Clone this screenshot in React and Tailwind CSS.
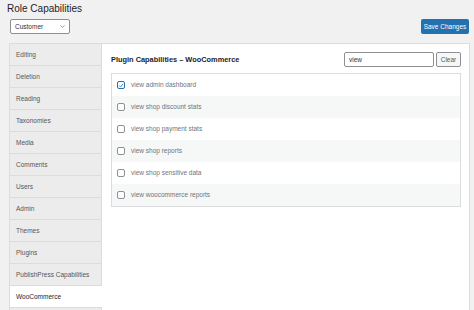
import { ChevronDown } from "lucide-react";

const TABS = [
  "Editing",
  "Deletion",
  "Reading",
  "Taxonomies",
  "Media",
  "Comments",
  "Users",
  "Admin",
  "Themes",
  "Plugins",
  "PublishPress Capabilities",
  "WooCommerce",
  "",
];

const CAPS = [
  { name: "view admin dashboard", checked: true },
  { name: "view shop discount stats" },
  { name: "view shop payment stats" },
  { name: "view shop reports" },
  { name: "view shop sensitive data" },
  { name: "view woocommerce reports" },
];

function Checkbox({ checked }) {
  return (
    <span
      className={`flex h-[8px] w-[8px] shrink-0 items-center justify-center rounded-[2px] border bg-white ${
        checked ? "border-[#2271b1]" : "border-[#8c8f94]"
      }`}
    >
      {checked && (
        <svg viewBox="0 0 10 10" className="h-[7px] w-[7px]">
          <path d="M2 5.2 4.2 7.4 8.2 2.6" fill="none" stroke="#2271b1" strokeWidth="1.4" />
        </svg>
      )}
    </span>
  );
}

export default function App() {
  return (
    <div className="h-[310px] w-[474px] overflow-hidden bg-[#f1f1f1] font-['Liberation_Sans',Arial,sans-serif]">
      <h1 className="pl-[7px] pt-[2px] text-[10px] leading-[14px] text-[#1d2327]">Role Capabilities</h1>

      <div className="mt-[3px] flex items-center justify-between pl-[10px] pr-[5px]">
        <div className="flex h-[15px] w-[60px] items-center justify-between rounded-[2px] border border-[#8c8f94] bg-white pl-[4px] pr-[3px] text-[6.5px] text-[#2c3338]">
          Customer
          <ChevronDown className="h-[7px] w-[7px] text-[#50575e]" strokeWidth={2} />
        </div>
        <button className="h-[15px] w-[48px] rounded-[2px] bg-[#2271b1] text-[6.5px] text-white">Save Changes</button>
      </div>

      <div className="ml-[9px] mr-[4px] mt-[9px] flex border-l border-t border-[#dcdcde]">
        <div className="w-[92px] shrink-0">
          {TABS.map((t, i) => {
            const active = t === "WooCommerce";
            return (
              <div
                key={i}
                className={`flex h-[22px] items-center border-b border-[#dcdcde] pl-[6px] text-[6.5px] ${
                  active ? "bg-white text-[#1d2327]" : "border-r bg-[#ececec] text-[#50575e]"
                }`}
              >
                {t}
              </div>
            );
          })}
        </div>

        <div className="flex-1 border-r border-[#dcdcde] bg-white pl-[9px] pr-[8px] pt-[8px]">
          <div className="flex h-[15px] items-center">
            <h2 className="flex-1 text-[7.4px] font-bold text-[#1d2327]">Plugin Capabilities – WooCommerce</h2>
            <div className="flex h-[15px] w-[90px] items-center rounded-[2px] border border-[#8c8f94] pl-[4px] text-[6.5px] text-[#2c3338]">
              view
            </div>
            <button className="ml-[2px] h-[15px] w-[25px] rounded-[2px] border border-[#8c8f94] bg-[#f6f7f7] text-[6.5px] text-[#50575e]">
              Clear
            </button>
          </div>

          <div className="mt-[6px] border border-[#dcdcde]">
            {CAPS.map((c, i) => (
              <div
                key={c.name}
                className={`flex h-[22px] items-center gap-[6px] pl-[5px] text-[6.5px] text-[#70757a] ${
                  i % 2 ? "bg-[#f6f7f7]" : "bg-white"
                }`}
              >
                <Checkbox checked={c.checked} />
                {c.name}
              </div>
            ))}
          </div>
        </div>
      </div>
    </div>
  );
}
